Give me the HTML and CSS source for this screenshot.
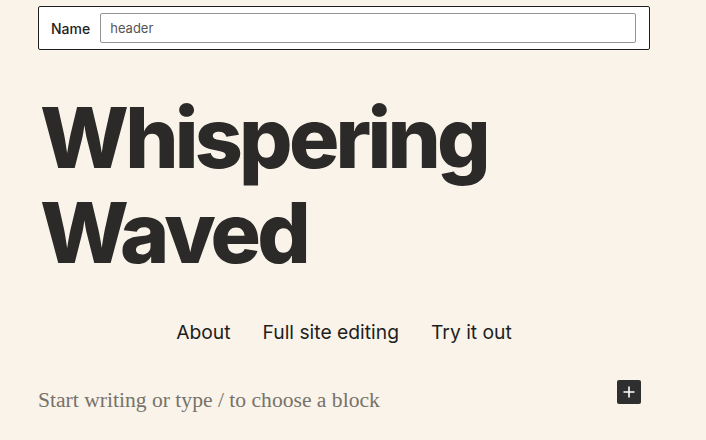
FILE: index.html
```html
<!DOCTYPE html>
<html lang="en">
<head>
  <meta charset="UTF-8" />
  <meta name="viewport" content="width=device-width, initial-scale=1.0" />
  <title>Whispering Waved</title>
  <link rel="stylesheet" href="styles.css">
</head>
<body>
  <div class="editor">
    <div class="name-bar">
      <label class="name-label" for="area-name">Name</label>
      <input class="name-input" id="area-name" type="text" value="header" />
    </div>

    <h1 class="site-title">Whispering Waved</h1>

    <nav class="site-nav">
      <a href="#">About</a>
      <a href="#">Full site editing</a>
      <a href="#">Try it out</a>
    </nav>

    <div class="block-row">
      <p class="placeholder">Start writing or type / to choose a block</p>
      <button class="add-block" aria-label="Add block">
        <svg width="16" height="16" viewBox="0 0 16 16">
          <path d="M8 2.5v11M2.5 8h11" stroke="#fff" stroke-width="1.6" />
        </svg>
      </button>
    </div>
  </div>
</body>
</html>
```

FILE: styles.css
```css
body {
  margin: 0;
  background-color: #f9f3e9;
  font-family: Inter, "Noto Sans", sans-serif;
  color: #2b2a28;
}
.editor {
  width: 612px;
  padding: 6px 0 0 38px;
}
.name-bar {
  display: flex;
  align-items: center;
  gap: 10px;
  height: 42px;
  padding: 0 13px 0 12px;
  background-color: #ffffff;
  border: 1px solid #1e1e1e;
  border-radius: 2px;
}
.name-label {
  font-size: 14px;
  font-weight: 500;
  color: #1e1e1e;
}
.name-input {
  flex: 1;
  height: 30px;
  box-sizing: border-box;
  padding: 0 9px;
  font-family: Inter, sans-serif;
  font-size: 13px;
  color: #555;
  border: 1px solid #949494;
  border-radius: 2px;
  outline: none;
}
.site-title {
  margin: 40px 0 0 2px;
  font-size: 84px;
  font-weight: 800;
  line-height: 95px;
  letter-spacing: -0.045em;
  width: 480px;
}
.site-nav {
  display: flex;
  justify-content: center;
  gap: 32px;
  margin-top: 40px;
}
.site-nav a {
  font-size: 19.3px;
  color: #1e1e1e;
  text-decoration: none;
}
.block-row {
  display: flex;
  align-items: flex-start;
  justify-content: space-between;
  margin-top: 36px;
  padding-right: 9px;
}
.placeholder {
  margin: 8px 0 0;
  font-family: "Liberation Serif", serif;
  font-size: 21.6px;
  color: #77726a;
}
.add-block {
  width: 24px;
  height: 24px;
  padding: 0;
  display: flex;
  align-items: center;
  justify-content: center;
  background-color: #2f2f2f;
  border: none;
  border-radius: 2px;
}
```
